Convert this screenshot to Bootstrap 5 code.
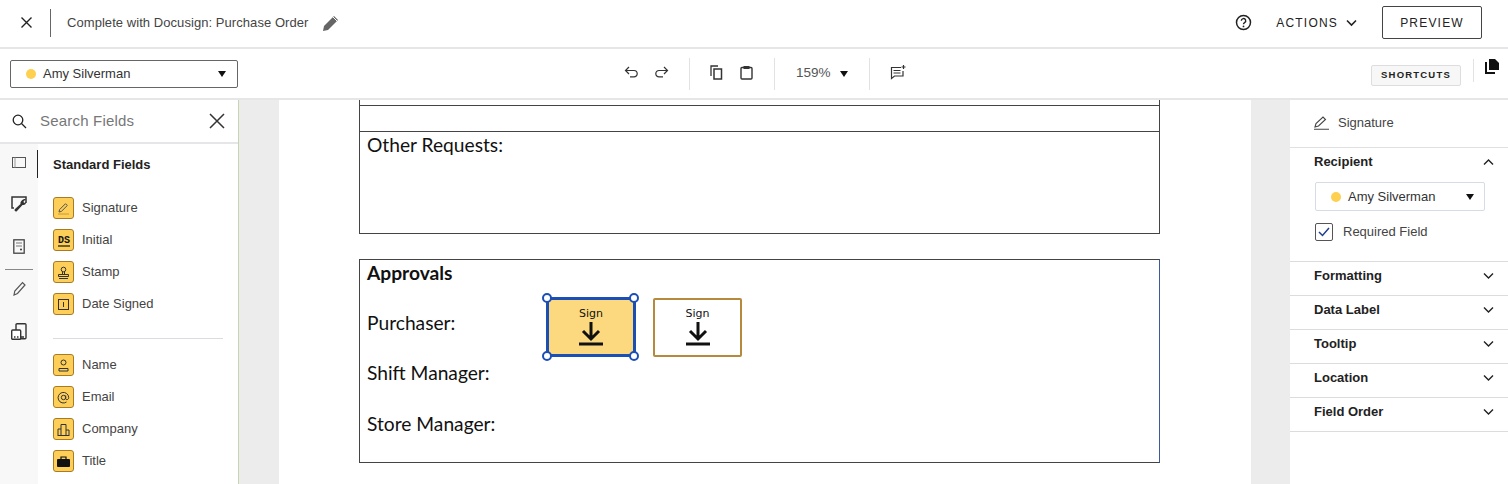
<!DOCTYPE html>
<html lang="en">
<head>
<meta charset="UTF-8" />
<title>Complete with Docusign</title>
<link href="https://cdn.jsdelivr.net/npm/bootstrap@5.3.3/dist/css/bootstrap.min.css" rel="stylesheet" />
<style>
html,body{height:484px;overflow:hidden}
body{font-family:"Liberation Sans",Arial,sans-serif;font-size:13px;color:#333;background:#fff}
svg{display:block;flex:none}
.top-bar{height:49px;border-bottom:2px solid #e6e6e9;padding:0 26px 2px 19px}
.close-x{width:15px}
.v-bar{width:1px;height:28px;background:#666;margin:0 16px 0 16px}
.doc-title{font-size:13px;color:#444;width:255px;letter-spacing:.06px}
.caps{font-size:12px;letter-spacing:1.2px;color:#222}
.preview-btn{width:100px;height:33px;border:1px solid #444;border-radius:2px;margin-left:25px}
.tool-bar{height:51px;border-bottom:2px solid #e6e6e9;padding:0 8px 0 10px}
.signer-select{width:228px;height:28px;border:1px solid #666;border-radius:2px;padding:0 11px 0 15px;color:#333}
.dot{width:10px;height:10px;border-radius:50%;background:#fdd04f;margin-right:7px}
.caret{width:0;height:0;border-left:4.5px solid transparent;border-right:4.5px solid transparent;border-top:6px solid #111}
.tool-mid{margin-left:386px;height:34px}
.tool-ico{margin-bottom:3px}
.tool-sep{width:1px;height:32px;background:#e2e2e2}
.zoom-txt{color:#555;font-size:13.5px}
.shortcut-btn{width:90px;height:21px;background:#f7f7f7;border:1px solid #ddd;border-radius:2px;font-size:9.5px;letter-spacing:1.2px;color:#222;font-weight:700;margin-top:3px}
.corner-sep{width:1px;height:23px;background:#e2e2e2;margin:-7px 10px 0 12px}
.work-area{height:384px}
.left-panel{width:239px;border-right:1px solid #c6d6ae}
.search-row{height:44px;border-bottom:2px solid #e6e6e9;padding:0 12px 0 12px}
.search-txt{font-size:15px;color:#777;margin-left:13px;letter-spacing:.2px}
.rail{width:38px;background:#f8f8f8;height:340px;padding-top:6px}
.rail-sep{width:28px;height:1px;background:#888}
.rail-tab{width:38px;height:28px;border-right:1px solid #222}
.field-col{padding:0 15px 0 15px;width:200px}
.field-head{font-weight:700;color:#222;height:48px;padding-top:11px}
.field-item{height:32px;color:#444}
.field-ico{width:21px;height:22px;background:#fdcf58;border:1px solid #a87a24;border-radius:3px;margin-right:8px}
.field-sep{height:1px;background:#d9dce0;margin:18px 0 10px}
.gutter{background:#ececec;padding:0 39px 0 40px;width:1051px}
.doc-page{background:#fff;padding:0 91px 0 80px;height:384px;position:relative;font-family:Lato,sans-serif;font-size:19.2px;color:#111;line-height:1}
.doc-table{border:1px solid #444;border-top:0}
.doc-thin{height:6px;border-bottom:1px solid #444}
.doc-blank{height:26px;border-bottom:1px solid #444}
.doc-other{height:101px;padding:3px 7px}
.doc-approvals{margin-top:25px;height:204px;border:1px solid #444;border-right-color:#3d5a9e;padding:3px 7px}
.appr-line{height:50.5px;display:flex;align-items:center}
.appr-head{font-weight:700;margin-bottom:13px;height:21px}
.sign-tag{position:absolute;font-family:"DejaVu Sans",sans-serif;font-size:11px;color:#111;border-radius:2px}
.sign-ico{margin-top:3px}
.sign-on{left:267px;top:197px;width:90px;height:60px;background:#fcd97e;border:3px solid #1c4fb5;padding-top:8px;border-radius:0}
.sign-off{left:374px;top:198px;width:89px;height:59px;background:#fff;border:2px solid #b58a3c;padding-top:8px}
.handle{position:absolute;width:10px;height:10px;border-radius:50%;background:#fff;border:2px solid #1c4fb5}
.right-panel{width:218px}
.sig-row{height:48px;border-bottom:1px solid #e0e0e0;padding:0 0 2px 24px;color:#444}
.acc-row{height:34px;border-bottom:1px solid #dcdcdc;padding:0 14px 6px 24px;font-weight:700;color:#222}
.acc-open{height:114px;border-bottom:1px solid #dcdcdc;padding:0 14px 0 24px;font-weight:400}
.acc-title{height:28px;font-weight:700;color:#222}
.rec-select{width:170px;height:29px;margin:6px 0 0 1px;border:1px solid #d6dbe8;border-radius:2px;padding:0 10px 0 15px;color:#333}
.req-row{margin-top:11px;margin-left:1px;color:#444}
.chk{width:18px;height:18px;border:1px solid #555;border-radius:2px;margin-right:10px}
</style>
</head>
<body>

<!-- top bar -->
<div class="top-bar d-flex align-items-center">
  <svg class="close-x" width="15" height="15" viewBox="0 0 15 15"><path d="M2.500 2.500l10 10M12.500 2.500l-10 10" stroke="#222" stroke-width="1.400"/></svg>
  <div class="v-bar"></div>
  <div class="doc-title">Complete with Docusign: Purchase Order</div>
  <svg width="18" height="18" viewBox="0 0 18 18"><path d="M1 17l1-5L12 2l4 4L6 16z" fill="#666"/><path d="M11 3l4 4" stroke="#fff" stroke-width="1"/></svg>
  <div class="ms-auto d-flex align-items-center">
    <svg width="17" height="17" viewBox="0 0 17 17" style="margin-right:24px"><circle cx="8.500" cy="8.500" r="7" fill="none" stroke="#222" stroke-width="1.500"/><path d="M6.300 6.800a2.200 2.200 0 1 1 3.300 1.900c-.7.4-1.100.8-1.100 1.600" fill="none" stroke="#222" stroke-width="1.400"/><circle cx="8.500" cy="12.400" r=".9" fill="#222"/></svg>
    <span class="caps">ACTIONS</span>
    <svg width="11" height="8" viewBox="0 0 11 8" class="ms-2"><path d="M1 1.500l4.500 4.500L10 1.500" fill="none" stroke="#222" stroke-width="1.600"/></svg>
    <div class="preview-btn caps d-flex align-items-center justify-content-center">PREVIEW</div>
  </div>
</div>

<!-- tool bar -->
<div class="tool-bar d-flex align-items-center">
  <div class="signer-select d-flex align-items-center">
    <span class="dot"></span><span>Amy Silverman</span><span class="caret ms-auto"></span>
  </div>
  <div class="tool-mid d-flex align-items-center">
    <svg class="tool-ico" width="15" height="12" viewBox="0 0 15 12" style="margin-right:15px"><path d="M5 1L1.500 4.500 5 8M2 4.500h8a3.200 3.200 0 0 1 0 6.400H6" fill="none" stroke="#333" stroke-width="1.200"/></svg>
    <svg class="tool-ico" width="15" height="12" viewBox="0 0 15 12"><path d="M10 1l3.500 3.500L10 8M13 4.500H5a3.200 3.200 0 0 0 0 6.400h4" fill="none" stroke="#333" stroke-width="1.200"/></svg>
    <div class="tool-sep" style="margin:0 20px"></div>
    <svg class="tool-ico" width="13" height="15" viewBox="0 0 13 15" style="margin-right:17px"><path d="M1 11V1h7" fill="none" stroke="#333" stroke-width="1.300"/><rect x="4" y="4" width="7.500" height="10" fill="none" stroke="#333" stroke-width="1.500"/></svg>
    <svg class="tool-ico" width="13" height="15" viewBox="0 0 13 15"><rect x="1" y="2.500" width="11" height="11.500" rx="1" fill="none" stroke="#333" stroke-width="1.400"/><rect x="3.500" y="1" width="6" height="3" fill="#333"/></svg>
    <div class="tool-sep" style="margin:0 21px"></div>
    <span class="zoom-txt">159%</span><span class="caret" style="margin:0 21px 0 9px"></span>
    <div class="tool-sep"></div>
    <svg class="tool-ico" width="16" height="15" viewBox="0 0 16 15" style="margin-left:20px"><path d="M11 2.500H1.500v11l3-2.500h8.500V6" fill="none" stroke="#333" stroke-width="1.200"/><path d="M3.500 5.500h7M3.500 8h7" stroke="#333"/><path d="M13.500 0v4M11.500 2h4" stroke="#333" stroke-width="1.200"/></svg>
  </div>
  <div class="ms-auto d-flex align-items-center">
    <div class="shortcut-btn d-flex align-items-center justify-content-center">SHORTCUTS</div>
    <div class="corner-sep"></div>
    <svg width="16" height="16" viewBox="0 0 16 16" style="margin-top:-16px"><path d="M5 1h6l4 4v7H5z" fill="#111"/><path d="M2 4v11h9" fill="none" stroke="#111" stroke-width="2"/></svg>
  </div>
</div>

<div class="work-area d-flex">
  <!-- left panel -->
  <div class="left-panel flex-none">
    <div class="search-row d-flex align-items-center">
      <svg width="15" height="15" viewBox="0 0 15 15"><circle cx="6" cy="6" r="4.800" fill="none" stroke="#222" stroke-width="1.300"/><path d="M9.500 9.500L14 14" stroke="#222" stroke-width="1.300"/></svg>
      <span class="search-txt">Search Fields</span>
      <svg class="ms-auto" width="18" height="18" viewBox="0 0 18 18"><path d="M2 2l14 14M16 2L2 16" stroke="#333" stroke-width="1.500"/></svg>
    </div>
    <div class="d-flex">
      <div class="rail d-flex flex-column align-items-center">
        <div class="rail-tab d-flex align-items-start justify-content-center" style="padding-top:7px">
          <svg width="14" height="11" viewBox="0 0 14 11"><rect x=".5" y=".5" width="13" height="10" fill="none" stroke="#555"/><path d="M3 .5v10" stroke="#999"/></svg>
        </div>
        <svg width="16" height="17" viewBox="0 0 16 17" style="margin-top:18px"><path d="M3 12H1V1h14v6" fill="none" stroke="#333" stroke-width="1.500"/><path d="M15 3l-2.500 2.500.5 1.500 2-1c.3 2-1.500 3.500-3.500 3L6 15c-1 1.500-3.500-.5-2-2l5.500-5c-.5-2.500 2-5.500 5.500-5z" fill="#333"/></svg>
        <svg width="12" height="15" viewBox="0 0 12 15" style="margin-top:26px"><rect x=".8" y=".8" width="10.400" height="13.400" fill="none" stroke="#444" stroke-width="1.300"/><path d="M3 4h6M3 7h6" stroke="#777"/><circle cx="8" cy="10.500" r="1" fill="#333"/></svg>
        <div class="rail-sep" style="margin-top:15px"></div>
        <svg width="13" height="15" viewBox="0 0 13 15" style="margin-top:11px"><path d="M1 14l.8-4L9.500 1.500l2.500 2.500L4.500 12.500z" fill="none" stroke="#555" stroke-width="1.200"/></svg>
        <svg width="16" height="17" viewBox="0 0 16 17" style="margin-top:27px"><rect x="5" y=".8" width="10" height="15" rx="1" fill="none" stroke="#333" stroke-width="1.400"/><rect x=".7" y="7" width="9" height="9.300" rx="1" fill="#fff" stroke="#333" stroke-width="1.400"/><path d="M3 14h1.500M6 14h1.500M10 14h3" stroke="#333" stroke-width="1.500"/></svg>
      </div>
      <div class="field-col">
        <div class="field-head">Standard Fields</div>
        <div class="field-item d-flex align-items-center"><span class="field-ico d-flex align-items-center justify-content-center"><svg width="13" height="13" viewBox="0 0 13 13"><path d="M2 10l.6-2.400L8.500 1.700l1.800 1.800L4.400 9.400z" fill="none" stroke="#555"/><path d="M1 12h11" stroke="#c59a35"/></svg></span>Signature</div>
        <div class="field-item d-flex align-items-center"><span class="field-ico d-flex align-items-center justify-content-center"><svg width="14" height="15" viewBox="0 0 14 15"><text x="7" y="10" text-anchor="middle" font-family="Liberation Mono, monospace" font-weight="700" font-size="10" fill="#111">DS</text><path d="M1 13h12" stroke="#111" stroke-width="1.200"/></svg></span>Initial</div>
        <div class="field-item d-flex align-items-center"><span class="field-ico d-flex align-items-center justify-content-center"><svg width="13" height="13" viewBox="0 0 13 13"><circle cx="6.500" cy="3.500" r="2.300" fill="none" stroke="#333"/><path d="M5.500 6v2M7.500 6v2M1.500 8.500h10v2h-10zM2 12.500h9" fill="none" stroke="#333"/></svg></span>Stamp</div>
        <div class="field-item d-flex align-items-center"><span class="field-ico d-flex align-items-center justify-content-center"><svg width="11" height="11" viewBox="0 0 11 11"><rect x=".5" y=".5" width="10" height="10" fill="none" stroke="#333"/><path d="M5.500 3v5" stroke="#333"/></svg></span>Date Signed</div>
        <div class="field-sep"></div>
        <div class="field-item d-flex align-items-center"><span class="field-ico d-flex align-items-center justify-content-center"><svg width="11" height="13" viewBox="0 0 11 13"><circle cx="5.500" cy="3.500" r="2.500" fill="none" stroke="#333"/><path d="M1 12V9.500h9V12z" fill="none" stroke="#333"/></svg></span>Name</div>
        <div class="field-item d-flex align-items-center"><span class="field-ico d-flex align-items-center justify-content-center"><svg width="13" height="13" viewBox="0 0 13 13"><circle cx="6.500" cy="6.500" r="2.200" fill="none" stroke="#333"/><path d="M8.700 4.500v3c0 1.800 3 1.600 3-1A5.300 5.300 0 1 0 9.500 11" fill="none" stroke="#333"/></svg></span>Email</div>
        <div class="field-item d-flex align-items-center"><span class="field-ico d-flex align-items-center justify-content-center"><svg width="13" height="13" viewBox="0 0 13 13"><path d="M4 12V1.500h5V12M1 12V6h3M9 7h3v5M.5 12.500h12" fill="none" stroke="#333"/></svg></span>Company</div>
        <div class="field-item d-flex align-items-center"><span class="field-ico d-flex align-items-center justify-content-center"><svg width="13" height="11" viewBox="0 0 13 11"><path d="M4 3V1h5v2" fill="none" stroke="#111" stroke-width="1.200"/><rect x="0" y="3" width="13" height="8" rx="1" fill="#111"/></svg></span>Title</div>
      </div>
    </div>
  </div>

  <!-- document -->
  <div class="gutter flex-none">
    <div class="doc-page">
      <div class="doc-table">
        <div class="doc-thin"></div>
        <div class="doc-blank"></div>
        <div class="doc-other">Other Requests:</div>
      </div>
      <div class="doc-approvals">
        <div class="appr-head">Approvals</div>
        <div class="appr-line">Purchaser:</div>
        <div class="appr-line">Shift Manager:</div>
        <div class="appr-line">Store Manager:</div>
      </div>
      <div class="sign-tag sign-on d-flex flex-column align-items-center">Sign
        <svg class="sign-ico" width="24" height="24" viewBox="0 0 24 24"><path d="M12 0v15M4 9l8 8 8-8" fill="none" stroke="#111" stroke-width="3"/><path d="M0 22h24" stroke="#111" stroke-width="3"/></svg>
      </div>
      <div class="sign-tag sign-off d-flex flex-column align-items-center">Sign
        <svg class="sign-ico" width="24" height="24" viewBox="0 0 24 24"><path d="M12 0v15M4 9l8 8 8-8" fill="none" stroke="#111" stroke-width="3"/><path d="M0 22h24" stroke="#111" stroke-width="3"/></svg>
      </div>
      <span class="handle" style="left:263px;top:193px"></span>
      <span class="handle" style="left:350px;top:193px"></span>
      <span class="handle" style="left:263px;top:251px"></span>
      <span class="handle" style="left:350px;top:251px"></span>
    </div>
  </div>

  <!-- right panel -->
  <div class="right-panel flex-none">
    <div class="sig-row d-flex align-items-center">
      <svg width="16" height="14" viewBox="0 0 16 14" class="me-2"><path d="M1 11l1-3.500L9 1l2.500 2.500L4.500 10zM0 13.300h15" fill="none" stroke="#444" stroke-width="1.100"/></svg>
      Signature
    </div>
    <div class="acc-open">
      <div class="acc-title d-flex align-items-center justify-content-between">Recipient
        <svg width="11" height="8" viewBox="0 0 11 8"><path d="M1 6.500L5.500 2 10 6.500" fill="none" stroke="#222" stroke-width="1.400"/></svg>
      </div>
      <div class="rec-select d-flex align-items-center">
        <span class="dot"></span><span>Amy Silverman</span><span class="caret ms-auto"></span>
      </div>
      <div class="req-row d-flex align-items-center">
        <span class="chk d-flex align-items-center justify-content-center"><svg width="12" height="10" viewBox="0 0 12 10"><path d="M1 5l3.500 3.500L11 1" fill="none" stroke="#1c3f94" stroke-width="1.500"/></svg></span>
        Required Field
      </div>
    </div>
    <div class="acc-row d-flex align-items-center justify-content-between">Formatting<svg width="11" height="8" viewBox="0 0 11 8"><path d="M1 1.500L5.500 6 10 1.500" fill="none" stroke="#222" stroke-width="1.400"/></svg></div>
    <div class="acc-row d-flex align-items-center justify-content-between">Data Label<svg width="11" height="8" viewBox="0 0 11 8"><path d="M1 1.500L5.500 6 10 1.500" fill="none" stroke="#222" stroke-width="1.400"/></svg></div>
    <div class="acc-row d-flex align-items-center justify-content-between">Tooltip<svg width="11" height="8" viewBox="0 0 11 8"><path d="M1 1.500L5.500 6 10 1.500" fill="none" stroke="#222" stroke-width="1.400"/></svg></div>
    <div class="acc-row d-flex align-items-center justify-content-between">Location<svg width="11" height="8" viewBox="0 0 11 8"><path d="M1 1.500L5.500 6 10 1.500" fill="none" stroke="#222" stroke-width="1.400"/></svg></div>
    <div class="acc-row d-flex align-items-center justify-content-between">Field Order<svg width="11" height="8" viewBox="0 0 11 8"><path d="M1 1.500L5.500 6 10 1.500" fill="none" stroke="#222" stroke-width="1.400"/></svg></div>
  </div>
</div>

<script src="https://cdn.jsdelivr.net/npm/bootstrap@5.3.3/dist/js/bootstrap.bundle.min.js"></script>
</body>
</html>
